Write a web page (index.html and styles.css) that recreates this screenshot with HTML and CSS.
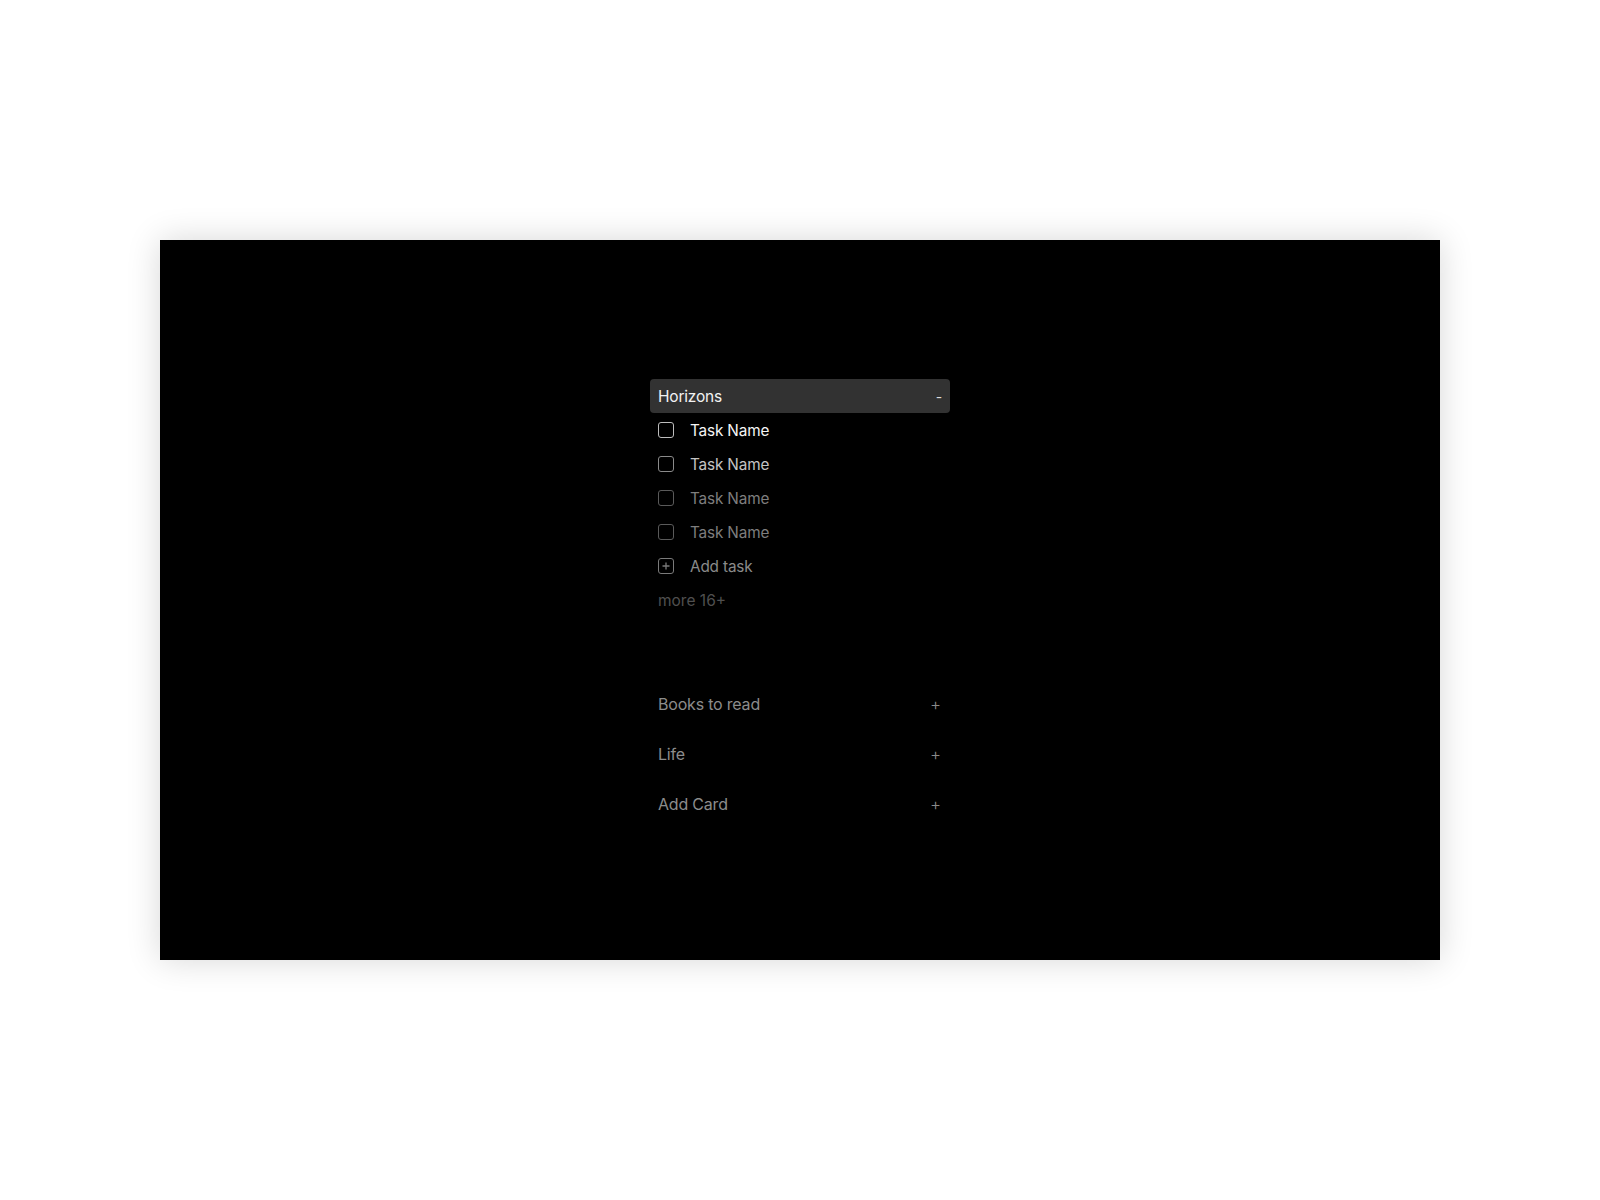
FILE: index.html
```html
<!DOCTYPE html>
<html>
<head>
<meta charset="utf-8">
<link rel="stylesheet" href="styles.css">
</head>
<body>
<div class="stage">
  <div class="screen">
    <div class="column">
      <div class="card">
        <div class="card-head"><span>Horizons</span><span class="minus">-</span></div>
        <div class="task t1"><span class="box"></span><span class="label">Task Name</span></div>
        <div class="task t2"><span class="box"></span><span class="label">Task Name</span></div>
        <div class="task t3"><span class="box"></span><span class="label">Task Name</span></div>
        <div class="task t4"><span class="box"></span><span class="label">Task Name</span></div>
        <div class="task add"><span class="box plus-box"><svg width="10" height="10" viewBox="0 0 10 10"><path d="M5 1.5v7M1.5 5h7" stroke="currentColor" stroke-width="1.3" fill="none"/></svg></span><span class="label">Add task</span></div>
        <div class="more">more 16+</div>
      </div>
      <div class="lists">
        <div class="list-row"><span>Books to read</span><span class="plus">+</span></div>
        <div class="list-row"><span>Life</span><span class="plus">+</span></div>
        <div class="list-row"><span>Add Card</span><span class="plus">+</span></div>
      </div>
    </div>
  </div>
</div>
</body>
</html>
```
FILE: styles.css
```css
* { box-sizing: border-box; }
html, body { margin: 0; padding: 0; background: #fff; }
body { font-family: Inter, "Noto Sans", sans-serif; }
.stage {
  width: 1600px;
  height: 1200px;
  display: flex;
  align-items: center;
  justify-content: center;
}
.screen {
  width: 1280px;
  height: 720px;
  background: #000;
  box-shadow: 0 0 32px rgba(0,0,0,0.16);
  display: flex;
  flex-direction: column;
  align-items: center;
  padding-top: 139px;
}
.column { width: 300px; display: flex; flex-direction: column; }
.card-head {
  height: 34px;
  background: #323232;
  border-radius: 4px;
  display: flex;
  align-items: center;
  justify-content: space-between;
  padding: 0 8px 0 8px;
  color: #f2f2f2;
  font-size: 15.5px;
  letter-spacing: -0.2px;
}
.minus { font-size: 14px; color: #ddd; }
.task {
  height: 34px;
  display: flex;
  align-items: center;
  padding-left: 8px;
  font-size: 15.3px;
  letter-spacing: -0.15px;
}
.box {
  width: 16px;
  height: 16px;
  border: 1.5px solid currentColor;
  border-radius: 3px;
  margin-right: 16px;
  display: flex;
  align-items: center;
  justify-content: center;
}
.t1 { color: #f5f5f5; }
.t1 .box { color: #bdbdbd; }
.t2 { color: #c4c4c4; }
.t2 .box { color: #8a8a8a; }
.t3, .t4 { color: #7e7e7e; }
.t3 .box, .t4 .box { color: #5a5a5a; }
.add { color: #8a8a8a; }
.add .box { color: #7a7a7a; }
.more {
  height: 34px;
  display: flex;
  align-items: center;
  padding-left: 8px;
  font-size: 15.5px;
  color: #4f4f4f;
}
.lists { margin-top: 62px; }
.list-row {
  height: 50px;
  display: flex;
  align-items: center;
  justify-content: space-between;
  padding: 0 9px 0 8px;
  font-size: 16px;
  color: #8c8c8c;
  letter-spacing: -0.2px;
}
.plus { font-size: 17px; font-weight: 300; color: #8a8a8a; }
```
